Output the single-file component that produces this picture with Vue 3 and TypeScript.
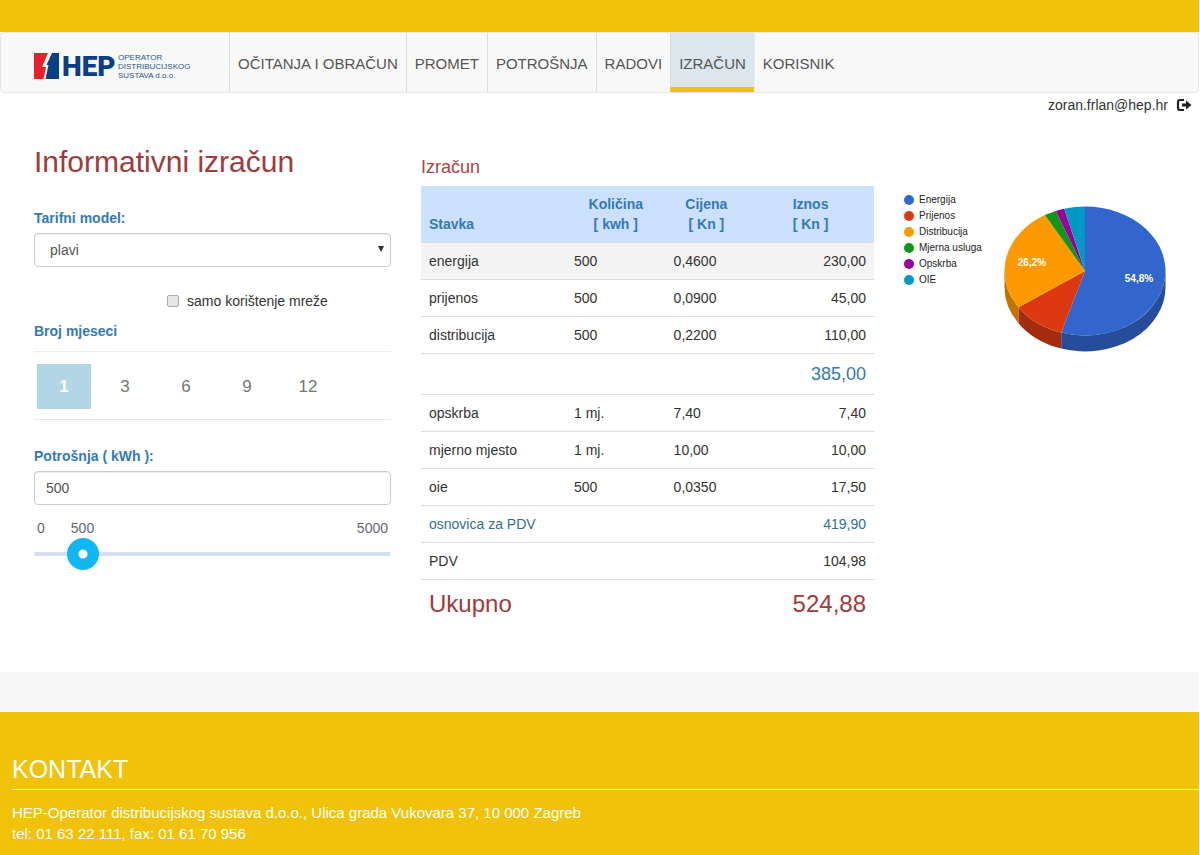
<script setup lang="ts">
import { computed, ref } from 'vue'

interface NavItem { label: string; active?: boolean }
interface Row { item: string; qty?: string; price?: string; amount: string; kind?: string }
interface Slice { label: string; value: number; color: string; side: string }

const nav: NavItem[] = [
  { label: 'OČITANJA I OBRAČUN' },
  { label: 'PROMET' },
  { label: 'POTROŠNJA' },
  { label: 'RADOVI' },
  { label: 'IZRAČUN', active: true },
  { label: 'KORISNIK' },
]

const rows: Row[] = [
  { item: 'energija', qty: '500', price: '0,4600', amount: '230,00', kind: 'shaded' },
  { item: 'prijenos', qty: '500', price: '0,0900', amount: '45,00' },
  { item: 'distribucija', qty: '500', price: '0,2200', amount: '110,00' },
  { item: '', amount: '385,00', kind: 'subtotal' },
  { item: 'opskrba', qty: '1 mj.', price: '7,40', amount: '7,40' },
  { item: 'mjerno mjesto', qty: '1 mj.', price: '10,00', amount: '10,00' },
  { item: 'oie', qty: '500', price: '0,0350', amount: '17,50' },
  { item: 'osnovica za PDV', amount: '419,90', kind: 'base' },
  { item: 'PDV', amount: '104,98' },
  { item: 'Ukupno', amount: '524,88', kind: 'total' },
]

const months = [1, 3, 6, 9, 12]
const month = ref(1)
const model = ref('plavi')
const networkOnly = ref(false)
const usage = ref(500)
const maxUsage = 5000
const thumb = 32

const valueLeft = computed(() => {
  const f = Math.min(1, Math.max(0, usage.value / maxUsage))
  return { left: `calc(${thumb / 2}px + (100% - ${thumb}px) * ${f})` }
})

const slices: Slice[] = [
  { label: 'Energija', value: 230, color: '#3366cc', side: '#264d99' },
  { label: 'Prijenos', value: 45, color: '#dc3912', side: '#a52b0e' },
  { label: 'Distribucija', value: 110, color: '#ff9900', side: '#bf7300' },
  { label: 'Mjerna usluga', value: 10, color: '#109618', side: '#0c7012' },
  { label: 'Opskrba', value: 7.4, color: '#990099', side: '#730073' },
  { label: 'OIE', value: 17.5, color: '#0099c6', side: '#007394' },
]

const cx = 81
const cy = 65
const rx = 80.5
const ry = 64.5
const depth = 16

function point(a: number): [number, number] {
  return [cx + rx * Math.sin(a), cy - ry * Math.cos(a)]
}

const pie = computed(() => {
  const sum = slices.reduce((t, s) => t + s.value, 0)
  let a = 0
  return slices.map((s) => {
    const from = a
    const to = a + (s.value / sum) * Math.PI * 2
    a = to
    const [x1, y1] = point(from)
    const [x2, y2] = point(to)
    const large = to - from > Math.PI ? 1 : 0
    const top = `M${cx} ${cy}L${x1} ${y1}A${rx} ${ry} 0 ${large} 1 ${x2} ${y2}Z`
    // Only the half facing the viewer has a visible wall.
    const wf = Math.max(from, Math.PI / 2)
    const wt = Math.min(to, Math.PI * 1.5)
    let wall = ''
    if (wt > wf) {
      const [u1, v1] = point(wf)
      const [u2, v2] = point(wt)
      wall = `M${u1} ${v1}A${rx} ${ry} 0 0 1 ${u2} ${v2}V${v2 + depth}A${rx} ${ry} 0 0 0 ${u1} ${v1 + depth}Z`
    }
    return { ...s, top, wall }
  })
})
</script>

<template>
  <div class="page">
    <div class="strip"></div>
    <header class="navbar">
      <a class="brand" href="#" aria-label="HEP Operator distribucijskog sustava">
        <svg width="162" height="30" viewBox="0 0 162 30">
          <path d="M0 2H14L8 16H12L9.500 28H0Z" fill="#e8202c" />
          <path d="M18 2H25V28H11.500L14.500 14H12.500Z" fill="#0b3f86" />
          <text class="hep" x="28" y="25">HEP</text>
          <text class="sub" x="84" y="9">OPERATOR</text>
          <text class="sub" x="84" y="18">DISTRIBUCIJSKOG</text>
          <text class="sub" x="84" y="27">SUSTAVA d.o.o.</text>
        </svg>
      </a>
      <nav class="menu">
        <a v-for="n in nav" :key="n.label" href="#" :class="{ active: n.active }">{{ n.label }}</a>
      </nav>
    </header>

    <div class="user">
      <span>zoran.frlan@hep.hr</span>
      <button type="button" aria-label="Odjava">
        <svg width="16" height="14" viewBox="0 0 16 14">
          <path d="M8 2H4Q2 2 2 4V10Q2 12 4 12H8" fill="none" stroke="#222" stroke-width="2.200" />
          <path d="M6 5.500H10V2.500L15.500 7L10 11.500V8.500H6Z" fill="#222" />
        </svg>
      </button>
    </div>

    <main class="content">
      <section class="form">
        <h1>Informativni izračun</h1>
        <label class="caption" for="model">Tarifni model:</label>
        <div class="select">
          <select id="model" v-model="model">
            <option>plavi</option>
            <option>bijeli</option>
            <option>crveni</option>
          </select>
          <svg class="caret" width="6" height="6" viewBox="0 0 6 6"><path d="M0 0H6L3 6Z" fill="#333" /></svg>
        </div>
        <div class="check">
          <input id="network" v-model="networkOnly" type="checkbox" />
          <label for="network">samo korištenje mreže</label>
        </div>
        <div id="months" class="caption">Broj mjeseci</div>
        <div class="months" role="group" aria-labelledby="months">
          <button v-for="m in months" :key="m" type="button" :class="{ on: m === month }" @click="month = m">{{ m }}</button>
        </div>
        <label class="caption" for="usage">Potrošnja ( kWh ):</label>
        <input id="usage" v-model.number="usage" class="field" type="text" />
        <div class="scale">
          <span>0</span>
          <span class="value" :style="valueLeft">{{ usage }}</span>
          <span>{{ maxUsage }}</span>
        </div>
        <input v-model.number="usage" class="slider" type="range" min="0" :max="maxUsage" aria-label="Potrošnja" />
      </section>

      <section class="result">
        <h2>Izračun</h2>
        <table>
          <thead>
            <tr>
              <th class="c1">Stavka</th>
              <th class="c2">Količina<br />[ kwh ]</th>
              <th class="c3">Cijena<br />[ Kn ]</th>
              <th class="c4">Iznos<br />[ Kn ]</th>
            </tr>
          </thead>
          <tbody>
            <tr v-for="(r, i) in rows" :key="i" :class="r.kind">
              <td>{{ r.item }}</td>
              <td>{{ r.qty }}</td>
              <td>{{ r.price }}</td>
              <td class="num">{{ r.amount }}</td>
            </tr>
          </tbody>
        </table>
      </section>

      <section class="chart">
        <ul>
          <li v-for="s in slices" :key="s.label">
            <svg width="10" height="10" viewBox="0 0 10 10"><circle cx="5" cy="5" r="5" :fill="s.color" /></svg>
            {{ s.label }}
          </li>
        </ul>
        <svg class="pie" width="162" height="147" viewBox="0 0 162 147">
          <path v-for="s in pie" :key="'w' + s.label" :d="s.wall" :fill="s.side" />
          <path v-for="s in pie" :key="'t' + s.label" :d="s.top" :fill="s.color" />
          <text x="28" y="60" text-anchor="middle">26,2%</text>
          <text x="135" y="76" text-anchor="middle">54,8%</text>
        </svg>
      </section>
    </main>

    <div class="band"></div>
    <footer>
      <h3>KONTAKT</h3>
      <p>HEP-Operator distribucijskog sustava d.o.o., Ulica grada Vukovara 37, 10 000 Zagreb<br />tel: 01 63 22 111, fax: 01 61 70 956</p>
    </footer>
  </div>
</template>

<style>
body {
  margin: 0;
  background: #fff;
}
</style>

<style scoped>
* {
  box-sizing: border-box;
}
.page {
  display: flex;
  flex-direction: column;
  min-height: 100vh;
  padding-right: 1px;
  font: 14px/20px 'Liberation Sans', Arial, sans-serif;
  color: #333;
}
.strip {
  height: 32px;
  background: #f0c30a;
}
.navbar {
  display: flex;
  height: 61px;
  background: #f8f8f8;
  border: 1px solid #e7e7e7;
  border-radius: 4px;
}
.brand {
  display: flex;
  align-items: center;
  width: 228px;
  padding: 6px 0 0 33px;
}
.hep {
  font: 900 28px Roboto, 'Liberation Sans', sans-serif;
  fill: #0b3f86;
}
.sub {
  font: 8px 'Liberation Sans', Arial, sans-serif;
  fill: #2c5691;
}
.menu {
  display: flex;
}
.menu a {
  padding: 0 8px;
  border-left: 1px solid #ddd;
  font-size: 15px;
  line-height: 61px;
  color: #555;
  text-decoration: none;
}
.menu a.active {
  background: #dbe6ed;
  border-bottom: 5px solid #f0c30a;
}
.menu a.active + a {
  border-left-color: #e8eef2;
}
.user {
  display: flex;
  justify-content: flex-end;
  align-items: center;
  gap: 8px;
  height: 24px;
  padding-right: 7px;
}
.user button {
  display: flex;
  padding: 0;
  border: 0;
  background: none;
}
.content {
  display: grid;
  grid-template-columns: 357fr 453fr 266fr;
  gap: 30px;
  padding: 0 29px 42px 34px;
}
.form {
  display: flex;
  flex-direction: column;
  padding-top: 27px;
}
h1,
h2,
h3,
p {
  margin: 0;
  font-weight: normal;
}
h1 {
  margin-bottom: 28px;
  font-size: 30px;
  line-height: 36px;
  color: #a13a3a;
}
.caption {
  font-weight: bold;
  color: #337ab7;
}
.select {
  position: relative;
  margin-top: 5px;
}
select,
.field {
  width: 100%;
  height: 34px;
  border: 1px solid #ccc;
  border-radius: 4px;
  background: #fff;
  box-shadow: inset 0 1px 1px rgba(0, 0, 0, 0.08);
  font: inherit;
  color: #555;
}
select {
  display: block;
  appearance: none;
  padding: 0 15px;
}
.caret {
  position: absolute;
  right: 7px;
  top: 13px;
}
.check {
  display: flex;
  justify-content: center;
  align-items: center;
  gap: 8px;
  margin: 24px 0 10px;
  padding-left: 70px;
}
.check input {
  appearance: none;
  width: 12px;
  height: 12px;
  margin: 0;
  border: 1px solid #aaa;
  border-radius: 2px;
  background: #e6e6e6;
}
.check input:checked {
  background: #337ab7;
}
.months {
  display: flex;
  gap: 7px;
  margin: 10px 0 26px;
  padding: 12px 3px 10px;
  border-top: 1px solid #eee;
  border-bottom: 1px solid #e8e8e8;
}
.months button {
  width: 54px;
  height: 45px;
  padding: 0;
  border: 0;
  background: none;
  font: 17px/20px 'Liberation Sans', Arial, sans-serif;
  color: #777;
}
.months button.on {
  background: #b3d6e6;
  font-weight: bold;
  color: #fff;
}
.field {
  margin-top: 5px;
  padding: 0 11px;
}
.scale {
  position: relative;
  display: flex;
  justify-content: space-between;
  margin-top: 14px;
  padding: 0 3px;
  line-height: 19px;
  color: #667;
}
.value {
  position: absolute;
  transform: translateX(-50%);
}
.slider {
  appearance: none;
  width: 100%;
  height: 32px;
  margin: 0;
  background: none;
}
.slider::-webkit-slider-runnable-track {
  height: 4px;
  border-radius: 2px;
  background: #d5deee;
}
.slider::-webkit-slider-thumb {
  appearance: none;
  width: 32px;
  height: 32px;
  margin-top: -14px;
  border-radius: 50%;
  background: radial-gradient(circle, #fff 4px, #10b7f2 5px);
}
.result {
  padding-top: 39px;
}
h2 {
  margin-bottom: 8px;
  font-size: 18px;
  line-height: 22px;
  color: #a94442;
}
table {
  width: 100%;
  table-layout: fixed;
  border-collapse: collapse;
}
.c1 {
  width: 32%;
}
.c2 {
  width: 22%;
}
.c3 {
  width: 18%;
}
.c4 {
  width: 28%;
}
th {
  padding: 8px;
  background: #cce0ff;
  color: #337ab7;
  vertical-align: bottom;
}
th.c1 {
  text-align: left;
}
td {
  height: 37px;
  padding: 8px;
  border-top: 1px solid #ddd;
}
.num {
  text-align: right;
}
.shaded td {
  background: #f4f4f4;
}
.subtotal td {
  height: 41px;
  font-size: 18px;
  line-height: 24px;
  color: #337ab7;
}
.base td {
  color: #31708f;
}
.total td {
  font-size: 24px;
  line-height: 32px;
  padding-bottom: 10px;
  color: #a13a3a;
}
.chart {
  display: flex;
  justify-content: space-between;
  align-items: flex-start;
  padding: 75px 4px 0 0;
}
ul {
  margin: 0;
  padding: 0;
  list-style: none;
  font-size: 10px;
  line-height: 16px;
  color: #222;
}
li {
  display: flex;
  align-items: center;
  gap: 5px;
  white-space: nowrap;
}
.pie {
  margin-top: 14px;
}
.pie text {
  font: bold 10px 'Liberation Sans', Arial, sans-serif;
  fill: #fff;
}
.band {
  height: 40px;
  background: #f7f7f7;
}
footer {
  flex: 1;
  padding: 40px 0 11px 12px;
  background: #f0c30a;
  color: #fff;
}
h3 {
  margin-bottom: 12px;
  padding-bottom: 3px;
  border-bottom: 1px solid #fff0b0;
  font-size: 25px;
  line-height: 34px;
}
p {
  font-size: 15px;
  line-height: 21px;
}
</style>
